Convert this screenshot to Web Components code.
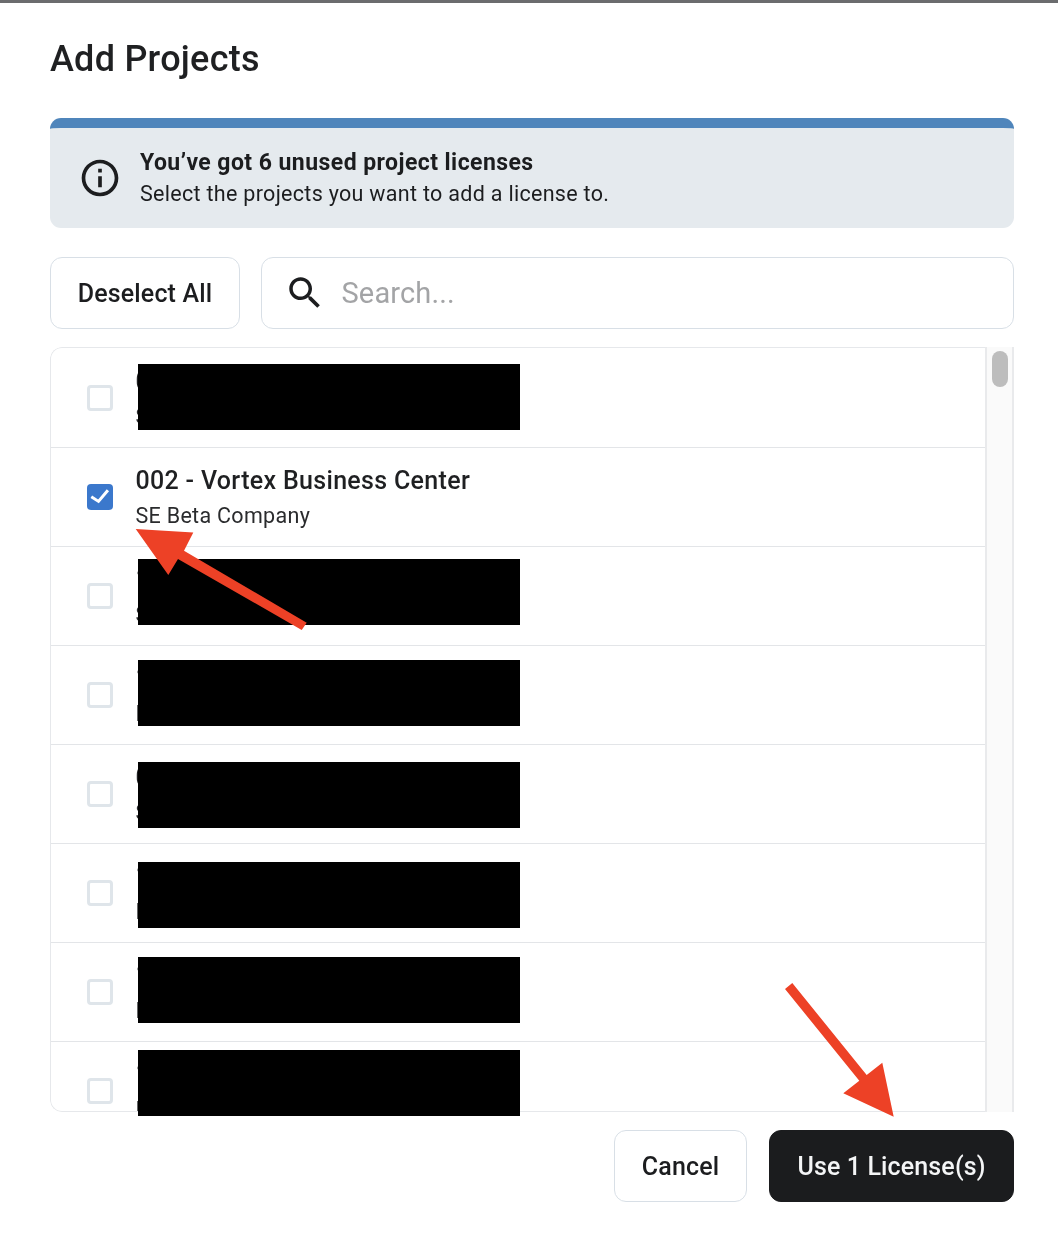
<!DOCTYPE html>
<html lang="en">
<head>
<meta charset="utf-8">
<title>Add Projects</title>
<style>
  html, body { margin: 0; padding: 0; background: #fff; }
  body { font-family: Roboto, "Liberation Sans", sans-serif; color: #1c1d1f; }
</style>
</head>
<body>
<add-projects-dialog>
  <info-banner heading="You’ve got 6 unused project licenses">Select the projects you want to add a license to.</info-banner>
  <project-list>
    <project-row name="0" company="S"></project-row>
    <project-row name="002 - Vortex Business Center" company="SE Beta Company" checked></project-row>
    <project-row name="1" company="S"></project-row>
    <project-row name="1" company="D"></project-row>
    <project-row name="0" company="S"></project-row>
    <project-row name="1" company="D"></project-row>
    <project-row name="1" company="D"></project-row>
    <project-row name="1" company="D"></project-row>
  </project-list>
</add-projects-dialog>
<annotation-layer></annotation-layer>

<script>
class AddProjectsDialog extends HTMLElement {
  constructor() {
    super();
    this.attachShadow({ mode: "open" });
    this.shadowRoot.innerHTML = `
      <style>
        :host {
          display: block;
          height: 1254px;
          box-sizing: border-box;
          border-top: 3px solid #6b6c6e;
          padding: 0 44px 0 50px;
          will-change: transform; /* greyscale text, like the reference */
        }
        h1 {
          margin: 0;
          padding-top: 33px;
          height: 115px;
          box-sizing: border-box;
          font-size: 36px;
          line-height: 46px;
          font-weight: 500;
          letter-spacing: .25px;
          color: #1f2022;
        }
        .tools {
          display: flex;
          gap: 21px;
          margin: 29px 0 18px;
        }
        .footer {
          display: flex;
          justify-content: flex-end;
          gap: 22px;
          margin-top: 18px;
        }
      </style>
      <h1>Add Projects</h1>
      <slot name="banner"></slot>
      <div class="tools">
        <action-button style="width:190px">Deselect All</action-button>
        <search-field placeholder="Search..."></search-field>
      </div>
      <slot></slot>
      <div class="footer">
        <action-button style="width:133px">Cancel</action-button>
        <action-button style="width:245px" primary>Use 1 License(s)</action-button>
      </div>
    `;
  }
}

class InfoBanner extends HTMLElement {
  constructor() {
    super();
    this.attachShadow({ mode: "open" });
    this.setAttribute("slot", "banner");
    this.shadowRoot.innerHTML = `
      <style>
        :host {
          display: flex;
          align-items: center;
          box-sizing: border-box;
          height: 110px;
          padding-left: 28px;
          gap: 18px;
          background: #e5eaee;
          border-top: 10px solid #4f85bb;
          border-radius: 11px;
        }
        svg { width: 44px; height: 44px; fill: #1c1d1f; flex: none; }
        .heading { font-size: 23px; line-height: 30px; font-weight: 700; letter-spacing: .44px; }
        .body { font-size: 21.5px; line-height: 30px; letter-spacing: .3px; margin-top: 1px; }
      </style>
      <svg viewBox="0 0 24 24"><path d="M11 7h2v2h-2zm0 4h2v6h-2zm1-9C6.48 2 2 6.48 2 12s4.48 10 10 10 10-4.48 10-10S17.52 2 12 2zm0 18c-4.41 0-8-3.59-8-8s3.59-8 8-8 8 3.59 8 8-3.59 8-8 8z"/></svg>
      <div>
        <div class="heading"></div>
        <div class="body"><slot></slot></div>
      </div>
    `;
    this.shadowRoot.querySelector(".heading").textContent = this.getAttribute("heading");
  }
}

class ActionButton extends HTMLElement {
  constructor() {
    super();
    this.attachShadow({ mode: "open" });
    this.shadowRoot.innerHTML = `
      <style>
        :host {
          display: flex;
          align-items: center;
          justify-content: center;
          box-sizing: border-box;
          height: 72px;
          flex: none;
          background: #fff;
          border: 1px solid #d8dfe6;
          border-radius: 12px;
          font-size: 25px;
          font-weight: 500;
          letter-spacing: .14px;
          color: #1c1d1f;
        }
        :host([primary]) {
          background: #1b1c1e;
          border-color: #1b1c1e;
          color: #f4f5f6;
          letter-spacing: .13px;
        }
      </style>
      <slot></slot>
    `;
  }
}

class SearchField extends HTMLElement {
  constructor() {
    super();
    this.attachShadow({ mode: "open" });
    this.shadowRoot.innerHTML = `
      <style>
        :host {
          display: flex;
          align-items: center;
          gap: 15.5px;
          flex: 1;
          box-sizing: border-box;
          height: 72px;
          padding-left: 22px;
          background: #fff;
          border: 1px solid #d8dfe6;
          border-radius: 12px;
        }
        svg { width: 42px; height: 42px; fill: #1c1d1f; flex: none; }
        span { font-size: 29px; color: #a3a4a6; letter-spacing: .15px; margin-top: -1px; }
      </style>
      <svg viewBox="0 0 24 24"><path d="M15.5 14h-.79l-.28-.27C15.41 12.59 16 11.11 16 9.5 16 5.91 13.09 3 9.5 3S3 5.91 3 9.5 5.91 16 9.5 16c1.61 0 3.09-.59 4.23-1.57l.27.28v.79l5 4.99L20.49 19l-4.99-5zm-6 0C7.01 14 5 11.99 5 9.5S7.01 5 9.5 5 14 7.01 14 9.5 11.99 14 9.5 14z"/></svg>
      <span></span>
    `;
    this.shadowRoot.querySelector("span").textContent = this.getAttribute("placeholder");
  }
}

class ProjectList extends HTMLElement {
  constructor() {
    super();
    this.attachShadow({ mode: "open" });
    this.shadowRoot.innerHTML = `
      <style>
        :host {
          display: flex;
          box-sizing: border-box;
          height: 765px;
          border-radius: 12px 0 0 12px;
          overflow: hidden;
        }
        .rows {
          flex: 1;
          min-width: 0;
          overflow: hidden;
          padding-top: 1px;
          border: 1px solid #e6e8eb;
          border-right: 0;
          border-radius: 12px 0 0 12px;
        }
        .track {
          flex: none;
          width: 29px;
          box-sizing: border-box;
          padding: 4px 0 0 5px;
          background: #fafafa;
          border-left: 2px solid #e9eaec;
          border-right: 2px solid #e9eaec;
        }
        .thumb {
          width: 16px;
          height: 36px;
          border-radius: 8px;
          background: #bdbdbd;
        }
      </style>
      <div class="rows"><slot></slot></div>
      <div class="track"><div class="thumb"></div></div>
    `;
  }
}

class ProjectRow extends HTMLElement {
  constructor() {
    super();
    this.attachShadow({ mode: "open" });
    this.shadowRoot.innerHTML = `
      <style>
        :host {
          display: flex;
          align-items: center;
          box-sizing: border-box;
          height: 99px;
          padding-left: 36px;
          gap: 23px;
          border-bottom: 1.5px solid #e3e5e8;
        }
        .name { font-size: 25px; line-height: 32px; font-weight: 500; letter-spacing: .32px; color: #1f2022; margin-left: -.5px; }
        .company { font-size: 21.5px; line-height: 28px; margin: 5px 0 0 -.5px; letter-spacing: .3px; color: #2a2b2d; }
      </style>
      <check-box></check-box>
      <div>
        <div class="name"></div>
        <div class="company"></div>
      </div>
    `;
    this.shadowRoot.querySelector(".name").textContent = this.getAttribute("name");
    this.shadowRoot.querySelector(".company").textContent = this.getAttribute("company");
    if (this.hasAttribute("checked")) {
      this.shadowRoot.querySelector("check-box").setAttribute("checked", "");
    }
  }
}

class CheckBox extends HTMLElement {
  constructor() {
    super();
    this.attachShadow({ mode: "open" });
    this.shadowRoot.innerHTML = `
      <style>
        :host {
          display: block;
          flex: none;
          box-sizing: border-box;
          width: 26px;
          height: 25.5px;
          background: #fff;
          border: 3px solid #dfe5ea;
          border-radius: 4px;
        }
        svg { display: none; }
        :host([checked]) { background: #3b78cc; border: 0; }
        :host([checked]) svg { display: block; width: 26px; height: 25.5px; }
      </style>
      <svg viewBox="0 0 26 25.5"><path d="M4.3 12.8l7.2 4.6 9.4-11.2" fill="none" stroke="#fff" stroke-width="3"/></svg>
    `;
  }
}

// redaction boxes and the red arrows sit on top of the finished dialog
class AnnotationLayer extends HTMLElement {
  constructor() {
    super();
    this.attachShadow({ mode: "open" });
    const tops = [364, 559, 660, 762, 862, 957, 1050];
    this.shadowRoot.innerHTML = `
      <style>
        :host { position: absolute; left: 0; top: 0; width: 1058px; height: 1254px; pointer-events: none; }
        svg { display: block; }
      </style>
      <svg width="1058" height="1254" viewBox="0 0 1058 1254">
        ${tops.map((y) => `<rect x="138" y="${y}" width="382" height="66" fill="#000"/>`).join("")}
        <polygon fill="#ed4126" points="135.7,529 193.3,532.5 184,550.7 306.7,622.7 301.7,630 178,559 168.3,575"/>
        <polygon fill="#ed4126" points="792.3,983 866.7,1075 882.3,1062.7 893.7,1116.7 843.3,1093.3 859.3,1080.7 785,989"/>
      </svg>
    `;
  }
}

customElements.define("check-box", CheckBox);
customElements.define("action-button", ActionButton);
customElements.define("search-field", SearchField);
customElements.define("info-banner", InfoBanner);
customElements.define("project-row", ProjectRow);
customElements.define("project-list", ProjectList);
customElements.define("add-projects-dialog", AddProjectsDialog);
customElements.define("annotation-layer", AnnotationLayer);
</script>
</body>
</html>
